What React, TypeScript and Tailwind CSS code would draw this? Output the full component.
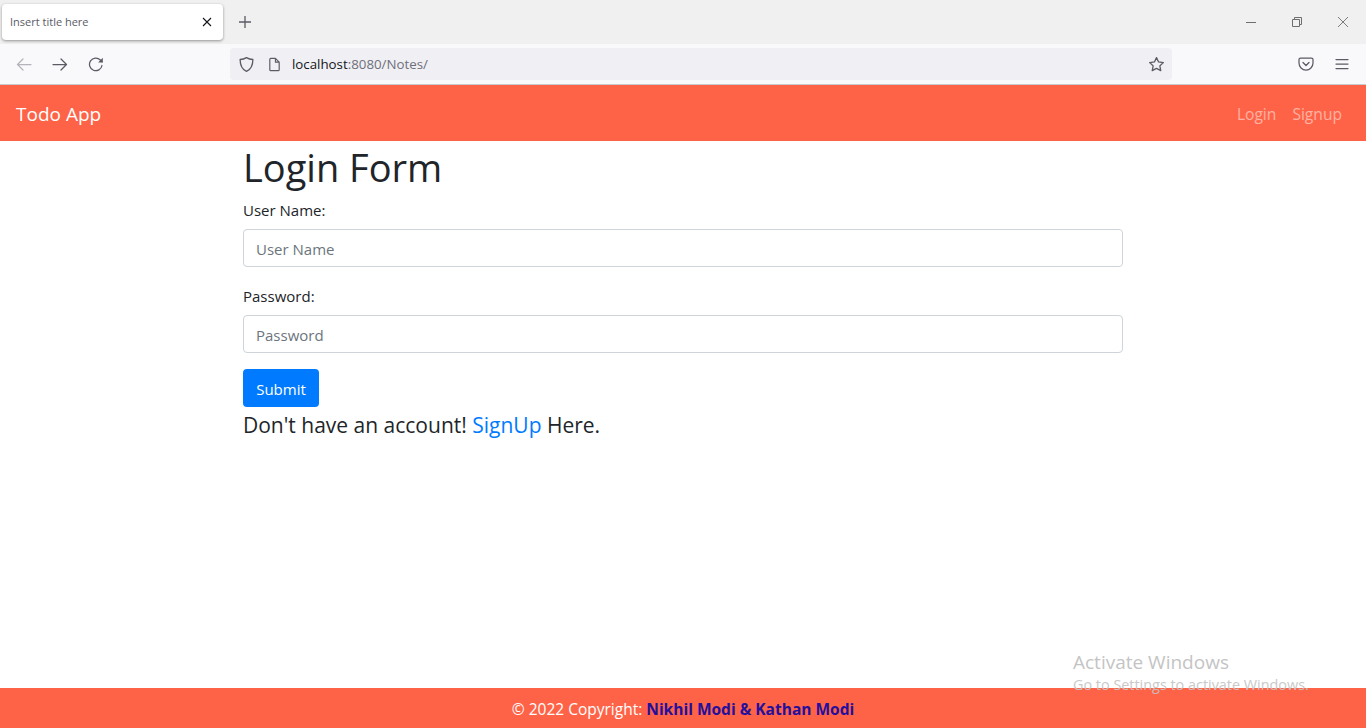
import React from 'react';

const uiFont = "[font-family:'Open_Sans','Noto_Sans',sans-serif]";

const Icon: React.FC<{ className?: string; size?: number; children: React.ReactNode }> = ({ className, size = 16, children }) => (
  <svg className={className} width={size} height={size} viewBox="0 0 16 16" fill="none" stroke="currentColor" strokeWidth={1.25} strokeLinecap="round" strokeLinejoin="round">
    {children}
  </svg>
);

const BrowserChrome: React.FC = () => (
  <div className={`shrink-0 ${uiFont}`}>
    {/* Tab strip */}
    <div className="flex h-[44px] items-center bg-[#f0f0f0] pl-[2px]">
      <div className="flex h-[36px] w-[221px] items-center justify-between rounded-[4px] bg-white pl-[8px] pr-[11px] shadow-[0_1px_3px_rgba(0,0,0,0.4)]">
        <span className="pt-px text-[11px] text-[#5b5b66]">Insert title here</span>
        <svg width="10" height="10" viewBox="0 0 10 10" stroke="#15141a" strokeWidth="1.1"><path d="M1 1l8 8M9 1l-8 8" /></svg>
      </div>
      <div className="flex w-[44px] justify-center text-[#5b5b66]">
        <svg width="14" height="14" viewBox="0 0 14 14" stroke="currentColor" strokeWidth="1.3"><path d="M7 1v12M1 7h12" /></svg>
      </div>
      <div className="ml-auto flex text-[#6e6e6e]">
        <div className="flex h-[44px] w-[46px] items-center justify-center">
          <svg width="10" height="10" viewBox="0 0 10 10" stroke="currentColor"><path d="M0 5.5h10" /></svg>
        </div>
        <div className="flex h-[44px] w-[46px] items-center justify-center">
          <svg width="10" height="10" viewBox="0 0 10 10" fill="none" stroke="currentColor"><path d="M.5 2.5h7v7h-7zM2.500 2.500v-2h7v7h-2" /></svg>
        </div>
        <div className="flex h-[44px] w-[46px] items-center justify-center">
          <svg width="10" height="10" viewBox="0 0 10 10" stroke="currentColor" strokeWidth="0.9"><path d="M0 0l10 10M10 0L0 10" /></svg>
        </div>
      </div>
    </div>

    {/* Toolbar */}
    <div className="flex h-[41px] items-center border-b border-[#c8cad0] bg-[#f9f9fb] px-[6px] text-[#5b5b66]">
      <div className="flex h-[36px] w-[36px] items-center justify-center text-[#b4b4ba]">
        <Icon><path d="M15 8.500H1.500M7 3L1.500 8.500 7 14" /></Icon>
      </div>
      <div className="flex h-[36px] w-[36px] items-center justify-center">
        <Icon><path d="M1 8.500h13.500M9 3l5.500 5.500L9 14" /></Icon>
      </div>
      <div className="flex h-[36px] w-[36px] items-center justify-center">
        <Icon><path d="M14 9.500A6.300 6.300 0 1 1 12.300 4L14 5.800" /><path d="M14.800 1.800v4.700h-4.700" fill="currentColor" stroke="none" /></Icon>
      </div>
      <div className="ml-[116px] flex h-[32px] w-[942px] items-center rounded-[4px] bg-[#f0f0f4]">
        <div className="flex w-[32px] justify-center">
          <Icon size={17}><path d="M8 1.500c2 1.200 4 1.700 6 1.800 0 5-1.500 9.200-6 11.200C3.500 12.500 2 8.300 2 3.300c2-.1 4-.6 6-1.800z" /></Icon>
        </div>
        <div className="flex w-[24px] justify-center">
          <Icon size={15}><path d="M3 2.500a1 1 0 0 1 1-1h5l4 4v8a1 1 0 0 1-1 1H4a1 1 0 0 1-1-1zM9 1.500v4h4" /></Icon>
        </div>
        <span className="ml-[6px] pt-[2px] text-[13.3px] text-[#15141a]">
          localhost<span className="text-[#6f6f7a]">:8080/Notes/</span>
        </span>
        <div className="ml-auto flex w-[32px] justify-center">
          <Icon size={17}><path d="M8 1.500l1.950 4.100 4.500.6-3.300 3.100.85 4.500L8 11.600l-4 2.200.85-4.500L1.550 6.200l4.500-.6z" /></Icon>
        </div>
      </div>
      <div className="ml-auto flex h-[36px] w-[36px] items-center justify-center">
        <Icon><path d="M2.500 2h11A1.500 1.500 0 0 1 15 3.500V7a7 7 0 0 1-14 0V3.500A1.500 1.500 0 0 1 2.500 2z" /><path d="M5 6.500L8 9.500l3-3" /></Icon>
      </div>
      <div className="flex h-[36px] w-[36px] items-center justify-center">
        <Icon><path d="M2 3.500h12M2 8h12M2 12.500h12" /></Icon>
      </div>
    </div>
  </div>
);

const Field: React.FC<{ label: string; type: string }> = ({ label, type }) => (
  <div className="mb-4">
    <label className="mb-2 block h-6 text-[15px] leading-[26px] text-[#212529]">{label}:</label>
    <input
      type={type}
      placeholder={label}
      className="block h-[38px] w-full rounded-[4px] border border-[#ced4da] bg-white px-3 pt-px text-[15px] text-[#495057] outline-none placeholder:text-[#6c757d]"
    />
  </div>
);

export default function App() {
  return (
    <div className={`relative flex h-[728px] flex-col overflow-hidden bg-white text-[#212529] ${uiFont}`}>
      <BrowserChrome />

      {/* Navbar */}
      <nav className="flex h-[56px] shrink-0 items-center justify-between bg-[#ff6347] px-4 pt-[3px]">
        <a className="text-[19px] text-white">Todo App</a>
        <div className="flex">
          <a className="px-2 text-[15.6px] text-white/50">Login</a>
          <a className="px-2 text-[15.6px] text-white/50">Signup</a>
        </div>
      </nav>

      {/* Form */}
      <main className="mx-auto w-[880px] flex-1">
        <h1 className="mb-2 h-12 text-[38px] leading-[53px]">Login Form</h1>
        <Field label="User Name" type="text" />
        <Field label="Password" type="password" />
        <button className="h-[38px] w-[76px] rounded-[4px] bg-[#007bff] pt-[2px] text-[15px] text-white">Submit</button>
        <h5 className="text-[21px] leading-[37px]">
          Don't have an account! <a className="text-[#007bff]">SignUp</a> Here.
        </h5>
      </main>

      {/* Footer */}
      <footer className="flex h-[40px] shrink-0 items-center justify-center bg-[#ff6347] pt-[3px] text-[15.5px] text-white">
        <span>
          © 2022 Copyright: <a className="font-bold text-[#23109c]">Nikhil Modi &amp; Kathan Modi</a>
        </span>
      </footer>

      {/* Windows watermark */}
      <div className="pointer-events-none absolute left-[1073px] top-[649px] text-[#c4c4c4]">
        <div className="text-[19px] leading-[27px]">Activate Windows</div>
        <div className="text-[14.4px] leading-[17px] opacity-90">Go to Settings to activate Windows.</div>
      </div>
    </div>
  );
}
